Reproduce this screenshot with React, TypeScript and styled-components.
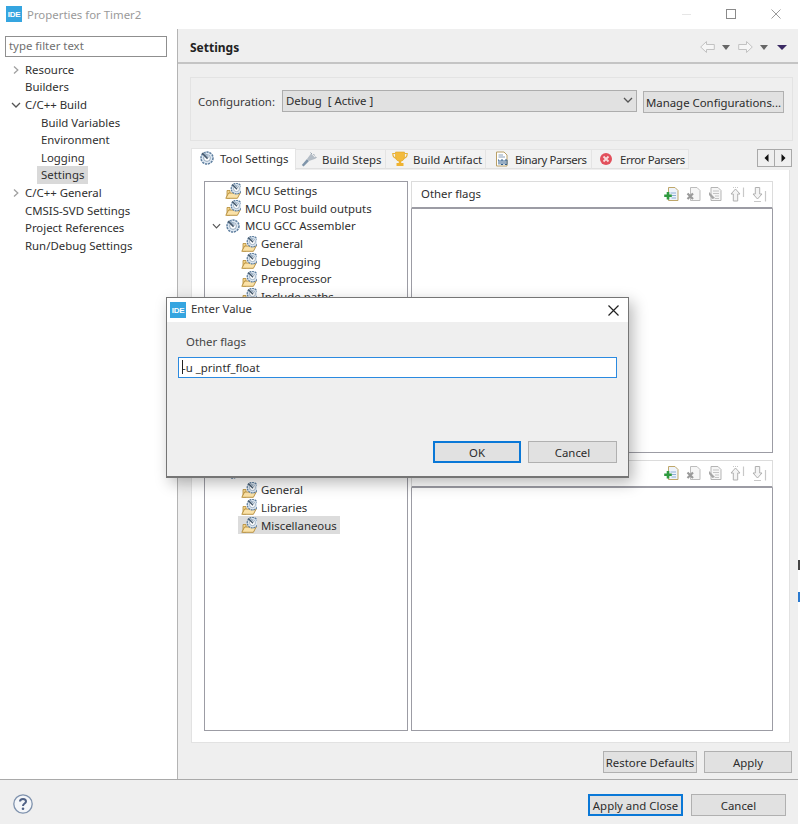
import React from 'react';
import styled, { createGlobalStyle } from 'styled-components';

const Global = createGlobalStyle`
  html, body { margin: 0; padding: 0; background: #fff; }
  body { font-family: "Noto Sans", "Open Sans", "Liberation Sans", sans-serif; font-size: 11.4px; color: #2f2f2f; }
  * { box-sizing: border-box; }
`;

const Page = styled.div`
  position: relative; width: 800px; height: 824px; overflow: hidden; background: #fff; display: flex;
`;
const Win = styled.div`
  width: 798px; height: 824px; flex: none; display: flex; flex-direction: column;
`;
const BackStrip = styled.div`
  width: 2px; flex: none; display: flex; flex-direction: column; padding-top: 560px;
`;
const BackTick = styled.span<{ $color: string; $h: number; $mt: number }>`
  display: block; width: 2px; height: ${p => p.$h}px; margin-top: ${p => p.$mt}px; background: ${p => p.$color};
`;
const TitleBar = styled.div`
  height: 29px; flex: none; display: flex; align-items: center; padding: 0 0 1px 6px; background: #fff;
`;
const Logo = styled.span`
  width: 16px; height: 16px; flex: none; background: #35a5e0; color: #fff; font: bold 8px "Liberation Sans", sans-serif;
  display: flex; align-items: center; justify-content: center; letter-spacing: -0.2px;
`;
const TitleText = styled.span`
  margin-left: 5px; color: #9a9a9a; flex: 1;
`;
const WinButtons = styled.div`
  display: flex; align-items: center; height: 16px; margin-right: 17px;
`;
const Main = styled.div`
  flex: 1; min-height: 0; display: flex; border-bottom: 1px solid #a9a9a9;
`;
const Sidebar = styled.div`
  width: 178px; flex: none; background: #fff; border-right: 1px solid #b4b4b4; padding: 7px 10px 0 5px;
`;
const FilterInput = styled.div`
  width: 162px; height: 21px; border: 1px solid #8f8f8f; padding: 0 3px; line-height: 18px; color: #6f6f6f;
`;
const NavTree = styled.div`
  margin-top: 4px; margin-left: -5px;
`;
const Row = styled.div<{ $indent: number }>`
  height: 17.6px; display: flex; align-items: center; padding-left: ${p => p.$indent}px; white-space: nowrap;
`;
const ChevronSlot = styled.span<{ $w: number }>`
  width: ${p => p.$w}px; flex: none; display: flex; align-items: center; justify-content: flex-start;
`;
const RowLabel = styled.span<{ $selected?: boolean }>`
  height: 18px; line-height: 17px; ${p => p.$selected ? 'background: #d9d9d9;' : ''}
  padding: 0 4px; margin-left: -4px;
`;
const ToolEntry = styled.span<{ $selected?: boolean }>`
  height: 18px; display: flex; align-items: center; gap: 4px; margin-left: -3px; padding: 0 3px;
  ${p => p.$selected ? 'background: #dcdcdc;' : ''}
`;
const Content = styled.div`
  flex: 1; min-width: 0; background: #efefef; display: flex; flex-direction: column;
`;
const Header = styled.div`
  height: 35px; flex: none; border-bottom: 2px solid #c4c4c4; display: flex; align-items: center; justify-content: space-between; padding: 3px 11px 0 12px;
`;
const HeaderTitle = styled.span`
  font-weight: 700; font-size: 12px; color: #222;
`;
const NavIcons = styled.div`
  display: flex; align-items: center;
`;
const ConfigGroup = styled.div`
  height: 64px; flex: none; margin: 13px 5px 0 12px; border: 1px solid #e3e3e3; padding: 12px 8px 0 7px; display: flex; align-items: flex-start;
`;
const ConfigLabel = styled.span`
  width: 84px; line-height: 24px; flex: none; color: #3a3a3a;
`;
const Combo = styled.div`
  width: 355px; height: 22px; flex: none; background: #e1e1e1; border: 1px solid #adadad; display: flex; align-items: center; justify-content: space-between; padding: 0 3px 2px 3px; white-space: pre;
`;
const Button = styled.div<{ $w: number; $focus?: boolean }>`
  width: ${p => p.$w}px; height: 22px; flex: none; background: #e1e1e1; border: ${p => p.$focus ? '2px solid #0a78d7' : '1px solid #b0b0b0'};
  display: flex; align-items: center; justify-content: center; white-space: nowrap; color: #2c2c2c;
`;
const ManageButton = styled(Button)`
  margin: 1px 0 0 6px;
`;
const TabBar = styled.div`
  height: 22px; flex: none; margin: 7px 5px 0 13px; display: flex; align-items: flex-start; position: relative; z-index: 1;
`;
const Tab = styled.div<{ $w: number; $active?: boolean; $pad: number; $gap: number; $ls?: number }>`
  width: ${p => p.$w}px; height: ${p => p.$active ? 22 : 20}px; margin-top: ${p => p.$active ? 0 : 1}px; flex: none; display: flex; align-items: center;
  padding: 0 0 ${p => p.$active ? 3 : 0}px ${p => p.$pad}px; gap: ${p => p.$gap}px; white-space: nowrap;
  letter-spacing: ${p => p.$ls ?? 0}px;
  background: ${p => p.$active ? '#fff' : '#f2f2f2'};
  border: 1px solid #e4e4e4; border-bottom: ${p => p.$active ? 'none' : '1px solid #e0e0e0'}; border-left: ${p => p.$active ? '1px solid #e4e4e4' : 'none'};
`;
const ScrollButtons = styled.div`
  margin-left: auto; margin-right: 1px; margin-top: 1px; display: flex;
`;
const ScrollButton = styled.div`
  width: 18px; height: 18px; background: #efefef; border: 1px solid #a9a9a9; margin-left: -1px; display: flex; align-items: center; justify-content: center;
`;
const TabPanel = styled.div`
  flex: 1; min-height: 0; margin: 0 8px 0 13px; background: #fff; border: 1px solid #e2e2e2; border-top: none; padding: 11px 16px 11px 12px; display: flex; gap: 3px;
`;
const TreePane = styled.div`
  width: 204px; flex: none; border: 1px solid #9c9ca4; overflow: hidden;
`;
const ToolRow = styled(Row)`
  gap: 4px;
`;
const RightPane = styled.div`
  flex: 1; min-width: 0; display: flex; flex-direction: column; gap: 7px;
`;
const Section = styled.div`
  flex: 1; min-height: 0; display: flex; flex-direction: column;
`;
const SectionHead = styled.div`
  height: 28px; flex: none; border: 1px solid #dcdcdc; border-bottom: 2px solid #9c9ca4; display: flex; align-items: center; justify-content: space-between; padding: 0 4px 0 9px;
`;
const SectionLabel = styled.span`
  margin-top: -2px;
`;
const SectionBody = styled.div`
  flex: 1; border: 1px solid #9c9ca4; border-top: none; background: #fff;
`;
const ToolIcons = styled.div`
  display: flex; gap: 5px; align-items: center;
`;
const Actions = styled.div`
  height: 36px; flex: none; display: flex; justify-content: flex-end; align-items: flex-start; gap: 7px; padding: 8px 6px 0 0;
`;
const Footer = styled.div`
  height: 44px; flex: none; background: #efefef; display: flex; align-items: flex-start; justify-content: space-between; padding: 14px 12px 0 13px;
`;
const FooterButtons = styled.div`
  display: flex; gap: 8px;
`;
const Dialog = styled.div`
  position: absolute; left: 166px; top: 297px; width: 463px; height: 181px; background: #efefef; border: 1px solid #757575; border-bottom-width: 2px;
  box-shadow: 4px 5px 14px rgba(0,0,0,0.28); display: flex; flex-direction: column; z-index: 5;
`;
const DialogTitle = styled.div`
  height: 24px; flex: none; background: #fff; display: flex; align-items: center; padding: 0 9px 0 3px; justify-content: space-between;
`;
const DialogTitleLeft = styled.div`
  display: flex; align-items: center; gap: 5px; color: #333;
`;
const DialogTitleText = styled.span`
  margin-top: -3px;
`;
const DialogBody = styled.div`
  flex: 1; padding: 11px 11px 12px 11px; display: flex; flex-direction: column;
`;
const DialogLabel = styled.div`
  padding-left: 8px; height: 17px; line-height: 17px; color: #444;
`;
const DialogInput = styled.div`
  margin-top: 7px; height: 21px; border: 1px solid #2b8ae0; background: #fff; padding: 0 3px 1px; display: flex; align-items: center; white-space: pre;
`;
const Caret = styled.span`
  width: 1px; height: 14px; background: #222; margin-right: -1px; flex: none;
`;
const DialogActions = styled.div`
  margin-top: auto; display: flex; justify-content: flex-end; gap: 7px; margin-bottom: 1px;
`;
const TriSvg = styled.svg<{ $ml: number }>`
  margin-left: ${p => p.$ml}px; flex: none; display: block;
`;

const ChevronRight = () => (
  <svg width="10" height="10" viewBox="0 0 10 10"><path d="M3 1.5 L6.8 5 L3 8.5" fill="none" stroke="#a0a0a0" strokeWidth="1.3" /></svg>
);
const ChevronDown = () => (
  <svg width="10" height="10" viewBox="0 0 10 10"><path d="M1 3 L5 7 L9 3" fill="none" stroke="#555" strokeWidth="1.3" /></svg>
);
const ToolSvg = () => (
  <>
    <circle cx="9" cy="7" r="6" fill="#dfe9f3" stroke="#5f7f9f" strokeWidth="1.5" strokeDasharray="2.2 0.8" />
    <circle cx="9" cy="7" r="3.4" fill="#fff" stroke="#7f97ae" strokeWidth="0.8" />
    <path d="M4.2 2.2 L9.6 7.6" stroke="#45596d" strokeWidth="1.7" />
    <path d="M6.5 1.8 L10.8 6.5" stroke="#93aac2" strokeWidth="1.1" />
  </>
);
const ToolIcon = () => (
  <svg width="16" height="16" viewBox="0 0 16 16" style={{ flex: 'none' }}><g transform="translate(-1 1)"><ToolSvg /></g></svg>
);
const FolderToolIcon = () => (
  <svg width="16" height="16" viewBox="0 0 16 16" style={{ flex: 'none' }}>
    <path d="M2 7.5 H5 V15 H2 Z" fill="#f3d68f" stroke="#b48a35" strokeWidth="0.8" />
    <path d="M0.8 15.3 L3.6 10 H15.2 L12.4 15.3 Z" fill="#fbe2a8" stroke="#b48a35" strokeWidth="0.9" />
    <g transform="translate(3.6 -0.5) scale(0.88)"><ToolSvg /></g>
  </svg>
);
const StepsIcon = () => (
  <svg width="16" height="16" viewBox="0 0 16 16" style={{ flex: 'none' }}>
    <path d="M0.8 14 L2.6 15.4 L8 10 L6 8 Z" fill="#7f95aa" />
    <path d="M6 8 L10 2.5 L15 7.5 L8 10 Z" fill="#b3bcc5" />
    <path d="M9.5 1.5 L11 3 M12.5 3 L13.5 4.5 M14 6 L15.5 6.5" stroke="#98a4af" strokeWidth="1" />
  </svg>
);
const TrophyIcon = () => (
  <svg width="16" height="16" viewBox="0 0 16 16" style={{ flex: 'none' }}>
    <path d="M3.5 1 H12.5 V6 C12.5 9 10.2 10.2 8 10.2 C5.8 10.2 3.5 9 3.5 6 Z" fill="#f3bb3c" stroke="#dda526" strokeWidth="0.6" />
    <path d="M3.5 2.5 H0.8 C0.8 5.5 2.2 7 4.4 7.4 M12.5 2.5 H15.2 C15.2 5.5 13.8 7 11.6 7.4" fill="none" stroke="#e9b233" strokeWidth="1.2" />
    <path d="M6.8 10 H9.2 V12 H11.5 V15 H4.5 V12 H6.8 Z" fill="#efb332" />
  </svg>
);
const BinaryIcon = () => (
  <svg width="16" height="16" viewBox="0 0 16 16" style={{ flex: 'none' }}>
    <path d="M2.5 1 H10 L13 4 V15 H2.5 Z" fill="#fff" stroke="#b9a067" strokeWidth="1" />
    <path d="M4.5 4 H9 M4.5 6 H11" stroke="#8aa0b8" strokeWidth="1" />
    <path d="M4 9 H5 V13.5 M7 9 H9 V13.5 H7 Z M11 9 H13 V13.5 H11 Z" fill="none" stroke="#2f5d8a" strokeWidth="1" />
  </svg>
);
const ErrorIcon = () => (
  <svg width="14" height="14" viewBox="0 0 14 14" style={{ flex: 'none' }}>
    <circle cx="7" cy="7" r="6" fill="#e2505c" />
    <path d="M4.5 4.5 L9.5 9.5 M9.5 4.5 L4.5 9.5" stroke="#f8dcdc" strokeWidth="1.8" />
  </svg>
);
const AddIcon = () => (
  <svg width="17" height="17" viewBox="0 0 17 17">
    <path d="M5.5 1.5 H12 L15 4.5 V14.5 H5.5 Z" fill="#eef3fa" stroke="#bfa76a" strokeWidth="1" />
    <path d="M7.5 7 H13 M8.5 9.5 H13 M8.5 12 H13" stroke="#8eb0d4" strokeWidth="1" />
    <path d="M3.7 6 H6.3 V8.5 H8.8 V11 H6.3 V13.5 H3.7 V11 H1.2 V8.5 H3.7 Z" fill="#2f9a3f" />
  </svg>
);
const DeleteIcon = () => (
  <svg width="17" height="17" viewBox="0 0 17 17">
    <path d="M5.5 1.5 H12 L15 4.5 V14.5 H5.5 Z" fill="#f6f6f6" stroke="#bdbdbd" strokeWidth="1" />
    <path d="M2.5 7.5 L8 13 M8 7.5 L2.5 13" stroke="#9a9a9a" strokeWidth="2.2" />
  </svg>
);
const EditIcon = () => (
  <svg width="17" height="17" viewBox="0 0 17 17">
    <path d="M4 1.5 H11 L14 4.5 V14.5 H4 Z" fill="#f6f6f6" stroke="#b5b5b5" strokeWidth="1" />
    <path d="M6 5 H12 M6 7.5 H12 M8 10 H12 M8 12.5 H12" stroke="#c4c4c4" strokeWidth="1" />
    <path d="M2 6 L8 12 L5.5 13 L2 9 Z" fill="#a6a6a6" />
  </svg>
);
const UpIcon = () => (
  <svg width="17" height="17" viewBox="0 0 17 17">
    <path d="M6.5 3 L11 8 H8.7 V15 H4.3 V8 H2 Z" fill="#f4f4f4" stroke="#b0b0b0" strokeWidth="1" />
    <path d="M14.5 1.5 V11" stroke="#c8c8c8" strokeWidth="1.2" />
    <path d="M4 1.5 H9" stroke="#c8c8c8" strokeWidth="1" strokeDasharray="1 1" />
  </svg>
);
const DownIcon = () => (
  <svg width="17" height="17" viewBox="0 0 17 17">
    <path d="M6.5 13 L11 8 H8.7 V1.5 H4.3 V8 H2 Z" fill="#f4f4f4" stroke="#b0b0b0" strokeWidth="1" />
    <path d="M14.5 5 V15.5" stroke="#c8c8c8" strokeWidth="1.2" />
    <path d="M3 15.5 H10" stroke="#c8c8c8" strokeWidth="1" />
  </svg>
);
const Toolbar = () => (
  <ToolIcons><AddIcon /><DeleteIcon /><EditIcon /><UpIcon /><DownIcon /></ToolIcons>
);
const HelpIcon = () => (
  <svg width="20" height="20" viewBox="0 0 20 20">
    <circle cx="10" cy="10" r="9.2" fill="#f4f6f9" stroke="#7f92ad" strokeWidth="1.3" />
    <path d="M7 7.6 C7 5.7 8.4 5 10 5 C11.8 5 13 6 13 7.5 C13 9.6 10 9.5 10 12" fill="none" stroke="#4f6185" strokeWidth="2" />
    <circle cx="10" cy="14.8" r="1.3" fill="#4f6185" />
  </svg>
);
const NavLeft = () => (
  <svg width="15" height="14" viewBox="0 0 15 14"><path d="M0.7 7 L6.5 1.5 V4.5 H14.3 V9.5 H6.5 V12.5 Z" fill="#f6f6f6" stroke="#c2c2c2" /></svg>
);
const NavRight = ({ ml }: { ml: number }) => (
  <svg width="15" height="14" viewBox="0 0 15 14" style={{ marginLeft: ml }}><path d="M14.3 7 L8.5 1.5 V4.5 H0.7 V9.5 H8.5 V12.5 Z" fill="#f6f6f6" stroke="#c2c2c2" /></svg>
);
const Tri = ({ color, w, ml }: { color: string; w: number; ml: number }) => (
  <TriSvg $ml={ml} width={w} height="5" viewBox={`0 0 ${w} 5`}><path d={`M0 0 H${w} L${w / 2} 5 Z`} fill={color} /></TriSvg>
);
const SmallArrow = ({ right }: { right?: boolean }) => (
  <svg width="5" height="8" viewBox="0 0 5 8"><path d={right ? 'M0.5 0 L4.5 4 L0.5 8 Z' : 'M4.5 0 L0.5 4 L4.5 8 Z'} fill="#111" /></svg>
);
const CloseX = ({ color, size, sw }: { color: string; size: number; sw: number }) => (
  <svg width={size} height={size} viewBox={`0 0 ${size} ${size}`}><path d={`M0.5 0.5 L${size - 0.5} ${size - 0.5} M${size - 0.5} 0.5 L0.5 ${size - 0.5}`} stroke={color} strokeWidth={sw} /></svg>
);
const MaxBox = styled.span`
  width: 10px; height: 10px; border: 1px solid #8a8a8a; margin: 0 35px 0 35px; display: block;
`;
const MinBar = styled.span`
  width: 9px; height: 1px; background: #e6e6e6; display: block;
`;

type NavItem = { label: string; level: number; exp?: 'r' | 'd'; sel?: boolean };
const nav: NavItem[] = [
  { label: 'Resource', level: 0, exp: 'r' },
  { label: 'Builders', level: 0 },
  { label: 'C/C++ Build', level: 0, exp: 'd' },
  { label: 'Build Variables', level: 1 },
  { label: 'Environment', level: 1 },
  { label: 'Logging', level: 1 },
  { label: 'Settings', level: 1, sel: true },
  { label: 'C/C++ General', level: 0, exp: 'r' },
  { label: 'CMSIS-SVD Settings', level: 0 },
  { label: 'Project References', level: 0 },
  { label: 'Run/Debug Settings', level: 0 },
];

type ToolItem = { label: string; kind: 'top' | 'group' | 'leaf'; sel?: boolean };
const tools: ToolItem[] = [
  { label: 'MCU Settings', kind: 'top' },
  { label: 'MCU Post build outputs', kind: 'top' },
  { label: 'MCU GCC Assembler', kind: 'group' },
  { label: 'General', kind: 'leaf' },
  { label: 'Debugging', kind: 'leaf' },
  { label: 'Preprocessor', kind: 'leaf' },
  { label: 'Include paths', kind: 'leaf' },
  { label: 'Miscellaneous', kind: 'leaf' },
  { label: 'MCU GCC Compiler', kind: 'group' },
  { label: 'General', kind: 'leaf' },
  { label: 'Debugging', kind: 'leaf' },
  { label: 'Preprocessor', kind: 'leaf' },
  { label: 'Include paths', kind: 'leaf' },
  { label: 'Optimization', kind: 'leaf' },
  { label: 'Warnings', kind: 'leaf' },
  { label: 'Miscellaneous', kind: 'leaf' },
  { label: 'MCU GCC Linker', kind: 'group' },
  { label: 'General', kind: 'leaf' },
  { label: 'Libraries', kind: 'leaf' },
  { label: 'Miscellaneous', kind: 'leaf', sel: true },
];

const indentFor = (k: ToolItem['kind']) => (k === 'leaf' ? 36 : k === 'group' ? 7 : 20);

export default function App() {
  return (
    <Page>
      <Global />
      <Win>
        <TitleBar>
          <Logo>IDE</Logo>
          <TitleText>Properties for Timer2</TitleText>
          <WinButtons>
            <MinBar />
            <MaxBox />
            <CloseX color="#9a9a9a" size={10} sw={1} />
          </WinButtons>
        </TitleBar>
        <Main>
          <Sidebar>
            <FilterInput>type filter text</FilterInput>
            <NavTree>
              {nav.map(n => (
                <Row key={n.label} $indent={n.level === 0 ? 11 : 41}>
                  {n.level === 0 && (
                    <ChevronSlot $w={14}>
                      {n.exp === 'r' && <ChevronRight />}
                      {n.exp === 'd' && <ChevronDown />}
                    </ChevronSlot>
                  )}
                  <RowLabel $selected={n.sel}>{n.label}</RowLabel>
                </Row>
              ))}
            </NavTree>
          </Sidebar>
          <Content>
            <Header>
              <HeaderTitle>Settings</HeaderTitle>
              <NavIcons>
                <NavLeft />
                <Tri color="#666" w={8} ml={7} />
                <NavRight ml={8} />
                <Tri color="#666" w={8} ml={7} />
                <Tri color="#3b2a63" w={10} ml={9} />
              </NavIcons>
            </Header>
            <ConfigGroup>
              <ConfigLabel>Configuration:</ConfigLabel>
              <Combo>
                <span>{'Debug  [ Active ]'}</span>
                <ChevronDown />
              </Combo>
              <ManageButton $w={141}>Manage Configurations...</ManageButton>
            </ConfigGroup>
            <TabBar>
              <Tab $w={105} $active $pad={7} $gap={5}><ToolIcon />Tool Settings</Tab>
              <Tab $w={90} $pad={5} $gap={5}><StepsIcon />Build Steps</Tab>
              <Tab $w={100} $pad={6} $gap={5}><TrophyIcon />Build Artifact</Tab>
              <Tab $w={106} $pad={8} $gap={5} $ls={-0.4}><BinaryIcon />Binary Parsers</Tab>
              <Tab $w={97} $pad={7} $gap={7} $ls={-0.4}><ErrorIcon />Error Parsers</Tab>
              <ScrollButtons>
                <ScrollButton><SmallArrow /></ScrollButton>
                <ScrollButton><SmallArrow right /></ScrollButton>
              </ScrollButtons>
            </TabBar>
            <TabPanel>
              <TreePane>
                {tools.map((t, i) => (
                  <ToolRow key={i} $indent={indentFor(t.kind)}>
                    {t.kind === 'group' && <ChevronSlot $w={9}><ChevronDown /></ChevronSlot>}
                    <ToolEntry $selected={t.sel}>
                      {t.kind === 'group' ? <ToolIcon /> : <FolderToolIcon />}
                      {t.label}
                    </ToolEntry>
                  </ToolRow>
                ))}
              </TreePane>
              <RightPane>
                <Section>
                  <SectionHead><SectionLabel>Other flags</SectionLabel><Toolbar /></SectionHead>
                  <SectionBody />
                </Section>
                <Section>
                  <SectionHead><span /><Toolbar /></SectionHead>
                  <SectionBody />
                </Section>
              </RightPane>
            </TabPanel>
            <Actions>
              <Button $w={94}>Restore Defaults</Button>
              <Button $w={88}>Apply</Button>
            </Actions>
          </Content>
        </Main>
        <Footer>
          <HelpIcon />
          <FooterButtons>
            <Button $w={95} $focus>Apply and Close</Button>
            <Button $w={95}>Cancel</Button>
          </FooterButtons>
        </Footer>
      </Win>
      <BackStrip>
        <BackTick $color="#444" $h={10} $mt={0} />
        <BackTick $color="#2a7ad0" $h={10} $mt={22} />
      </BackStrip>
      <Dialog>
        <DialogTitle>
          <DialogTitleLeft><Logo>IDE</Logo><DialogTitleText>Enter Value</DialogTitleText></DialogTitleLeft>
          <CloseX color="#222" size={11} sw={1.2} />
        </DialogTitle>
        <DialogBody>
          <DialogLabel>Other flags</DialogLabel>
          <DialogInput><Caret />-u _printf_float</DialogInput>
          <DialogActions>
            <Button $w={88} $focus>OK</Button>
            <Button $w={89}>Cancel</Button>
          </DialogActions>
        </DialogBody>
      </Dialog>
    </Page>
  );
}
